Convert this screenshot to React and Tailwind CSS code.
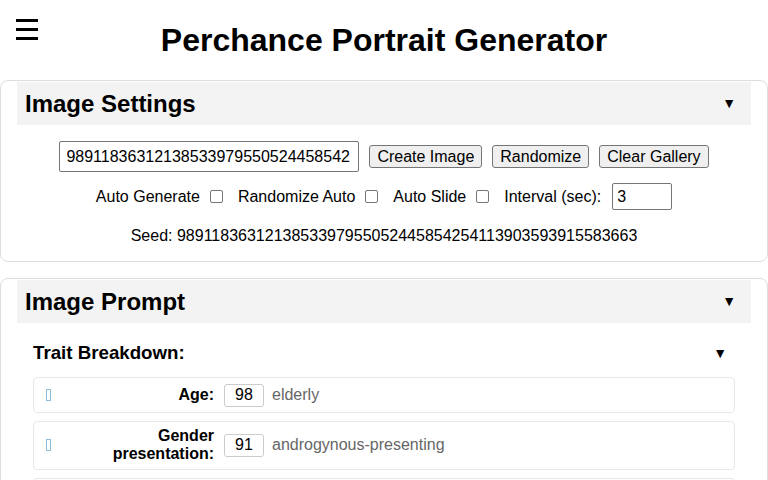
import React from 'react';

const traits = [
  { label: 'Age:', value: 98, text: 'elderly' },
  { label: 'Gender presentation:', value: 91, text: 'androgynous-presenting' },
  { label: 'Build:', value: 42, text: 'average build' },
];

const Check = () => (
  <span className="inline-block w-[13px] h-[13px] border border-[#767676] rounded-[2px] bg-white" />
);

const Section = ({ title, children }) => (
  <div className="border border-[#ddd] rounded-[8px] px-4 pt-[1px] pb-[13px] bg-white">
    <div className="flex items-center justify-between bg-[#f3f3f3] h-[43px] pl-2 pr-[15px]">
      <h2 className="text-[24px] font-bold">{title}</h2>
      <span className="text-[14px]">▼</span>
    </div>
    {children}
  </div>
);

export default function App() {
  return (
    <div className="min-h-screen bg-white text-black text-[16px]" style={{ fontFamily: '"Liberation Sans", Arial, sans-serif' }}>
      <header className="relative h-[80px] flex items-center justify-center">
        <button className="absolute left-[16px] top-[19px] flex flex-col gap-[6px]" aria-label="menu">
          <span className="block w-[22px] h-[3px] bg-black" />
          <span className="block w-[22px] h-[3px] bg-black" />
          <span className="block w-[22px] h-[3px] bg-black" />
        </button>
        <h1 className="text-[32px] font-bold">Perchance Portrait Generator</h1>
      </header>

      <Section title="Image Settings">
        <div className="flex flex-col items-center pt-4">
          <div className="flex items-center gap-[10px]">
            <div className="w-[300px] h-[31px] border border-[#767676] rounded-[2px] px-[6px] flex items-center overflow-hidden whitespace-nowrap">
              98911836312138533979550524458542
            </div>
            {['Create Image', 'Randomize', 'Clear Gallery'].map((b) => (
              <button key={b} className="h-[23px] px-[7px] bg-[#efefef] border border-[#767676] rounded-[3px] leading-none">
                {b}
              </button>
            ))}
          </div>
          <div className="flex items-center mt-[11px] h-[27px]">
            <span>Auto Generate</span>
            <span className="ml-[10px] mr-[15px] flex"><Check /></span>
            <span>Randomize Auto</span>
            <span className="ml-[10px] mr-[15px] flex"><Check /></span>
            <span>Auto Slide</span>
            <span className="ml-[10px] mr-[15px] flex"><Check /></span>
            <span>Interval (sec):</span>
            <div className="ml-[11px] w-[60px] h-[27px] border border-[#767676] rounded-[2px] px-[4px] flex items-center">3</div>
          </div>
          <div className="mt-[14px]">Seed: 9891183631213853397955052445854254113903593915583663</div>
        </div>
      </Section>

      <div className="mt-4">
        <Section title="Image Prompt">
          <div className="px-4">
            <div className="flex items-center justify-between mt-[16px] mb-[10px] pr-2">
              <h3 className="text-[18.72px] font-bold">Trait Breakdown:</h3>
              <span className="text-[14px]">▼</span>
            </div>
            <div className="flex flex-col gap-2">
              {traits.map((t) => (
                <div key={t.label} className="flex items-center border border-[#e8e8e8] rounded-[4px] py-[5px] pl-3">
                  <span className="w-[5px] h-[12px] border border-[#8fbcd8]" />
                  <div className="w-[152px] ml-[11px] text-right font-bold leading-[18.4px]">{t.label}</div>
                  <div className="ml-[10px] w-[40px] h-[23px] border border-[#ccc] rounded-[3px] flex items-center justify-center">{t.value}</div>
                  <span className="ml-[8px] text-[#666]">{t.text}</span>
                </div>
              ))}
            </div>
          </div>
        </Section>
      </div>
    </div>
  );
}
